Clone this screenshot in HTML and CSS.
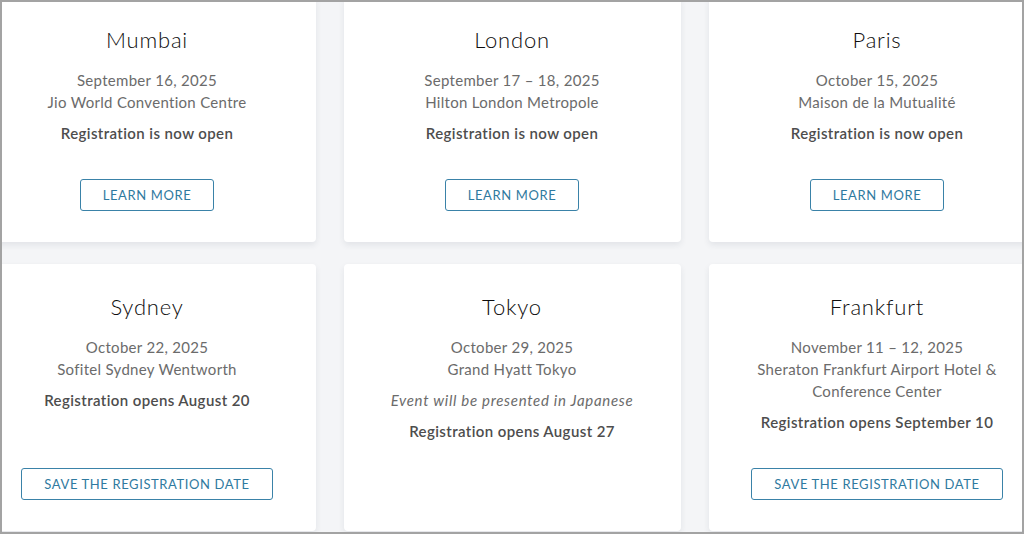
FILE: index.html
```html
<!DOCTYPE html>
<html lang="en">
<head>
  <meta charset="UTF-8">
  <meta name="viewport" content="width=device-width, initial-scale=1.0">
  <title>event locations</title>
  <link rel="stylesheet" href="styles.css">
</head>
<body>
  <div class="frame">
    <div class="events">
      <div class="card">
        <div class="card-body">
          <h3>Mumbai</h3>
          <p class="when">September 16, 2025<br>Jio World Convention Centre</p>
          <p class="status">Registration is now open</p>
        </div>
        <button>Learn more</button>
      </div>
      <div class="card">
        <div class="card-body">
          <h3>London</h3>
          <p class="when">September 17 – 18, 2025<br>Hilton London Metropole</p>
          <p class="status">Registration is now open</p>
        </div>
        <button>Learn more</button>
      </div>
      <div class="card">
        <div class="card-body">
          <h3>Paris</h3>
          <p class="when">October 15, 2025<br>Maison de la Mutualité</p>
          <p class="status">Registration is now open</p>
        </div>
        <button>Learn more</button>
      </div>

      <div class="card">
        <div class="card-body">
          <h3>Sydney</h3>
          <p class="when">October 22, 2025<br>Sofitel Sydney Wentworth</p>
          <p class="status">Registration opens August 20</p>
        </div>
        <button>Save the registration date</button>
      </div>
      <div class="card">
        <div class="card-body">
          <h3>Tokyo</h3>
          <p class="when">October 29, 2025<br>Grand Hyatt Tokyo</p>
          <p class="note">Event will be presented in Japanese</p>
          <p class="status">Registration opens August 27</p>
        </div>
      </div>
      <div class="card">
        <div class="card-body">
          <h3>Frankfurt</h3>
          <p class="when">November 11 – 12, 2025<br>Sheraton Frankfurt Airport Hotel &amp;<br>Conference Center</p>
          <p class="status">Registration opens September 10</p>
        </div>
        <button>Save the registration date</button>
      </div>
    </div>
  </div>
</body>
</html>
```

FILE: styles.css
```css
html, body {
  margin: 0;
  padding: 0;
}

body {
  font-family: Lato, 'Open Sans', Arial, sans-serif;
  background-color: #fff;
}

/* the grey frame round the whole shot */
.frame {
  box-sizing: border-box;
  height: 534px;
  overflow: hidden;
  border: 2px solid #a3a3a3;
  background-color: #f4f5f7;
}

/* grid is wider than the window, so the side cards get clipped */
.events {
  display: grid;
  grid-template-columns: repeat(3, 337px);
  column-gap: 28px;
  row-gap: 22px;
  width: 1067px;
  margin-left: calc((100% - 1067px) / 2);
  margin-top: -5px;
}

.card {
  display: flex;
  flex-direction: column;
  align-items: center;

  padding: 28px 20px 31px;
  border-radius: 4px;
  background-color: #fff;
  box-shadow: 0 3px 6px rgba(40, 60, 80, 0.09);
  text-align: center;
}

.card-body {
  flex: 1;
  width: 100%;
}

.card h3 {
  margin: 0;
  font-size: 22px;
  line-height: 30px;
  font-weight: 300;
  letter-spacing: 0.8px;
  color: #0d0d0d;
}

.card p {
  margin: 9px 0 0;
  font-size: 15px;
  line-height: 22px;
  letter-spacing: 0.3px;
}

.card .when {
  margin-top: 14px;
  color: #6b6b6b;
}

.card .note {
  font-style: italic;
  letter-spacing: 0.7px;
  color: #6b6b6b;
}

.card .status {
  font-weight: 600;
  letter-spacing: 0.4px;
  color: #4d4d4d;
}

.card button {
  height: 32px;
  margin-top: 35px;
  padding: 0 22px;

  border: 1px solid #3a82a8;
  border-radius: 3px;
  background: #fff;
  color: #2f7aa0;

  font-family: inherit;
  font-size: 13px;
  letter-spacing: 0.6px;
  text-transform: uppercase;
  cursor: pointer;
}
```
